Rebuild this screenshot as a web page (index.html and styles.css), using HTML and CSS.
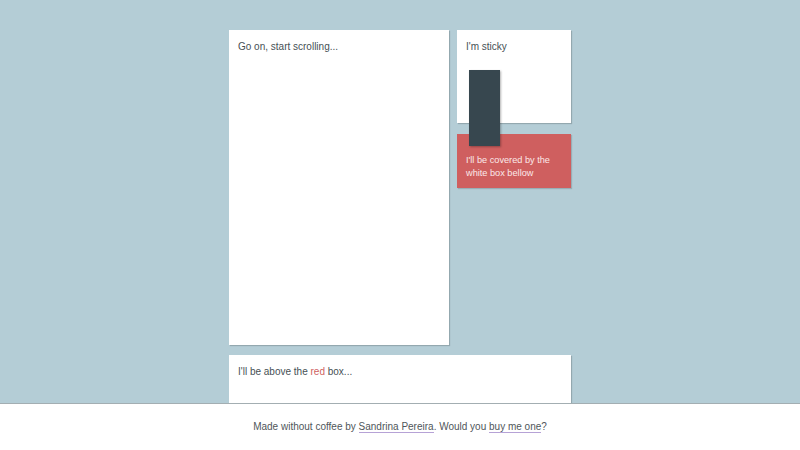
FILE: index.html
```html
<!DOCTYPE html>
<html>
<head>
<meta charset="utf-8">
<link rel="stylesheet" href="styles.css">
</head>
<body>
<div class="page">
  <div class="row">
    <div class="card main">Go on, start scrolling...</div>
    <div class="side">
      <div class="card sticky">I'm sticky</div>
      <div class="red">I'll be covered by the white box bellow</div>
      <div class="dark"></div>
    </div>
  </div>
  <div class="card bottom">I'll be above the <span class="hl">red</span> box...</div>
</div>
<footer class="footer"><p class="credit">Made without coffee by <a href="#">Sandrina Pereira</a>. Would you <a href="#">buy me one</a>?</p></footer>
</body>
</html>
```
FILE: styles.css
```css
html, body {
  margin: 0;
  padding: 0;
  height: 100%;
  overflow: hidden;
}
body {
  background: #b4cdd6;
  font-family: "Liberation Sans", Arial, sans-serif;
  font-size: 10px;
  color: #4a5257;
}
.page {
  width: 342px;
  margin: 0 auto;
  padding-top: 30px;
  display: flex;
  flex-direction: column;
  gap: 10px;
}
.row {
  display: flex;
  gap: 8px;
  align-items: flex-start;
}
.card {
  background: #fff;
  box-shadow: 1px 1px 1px rgba(0, 0, 0, 0.18);
  padding: 10px 9px;
  box-sizing: border-box;
  line-height: 13px;
  font-size: 10px;
  color: #465055;
}
.main {
  width: 220px;
  height: 315px;
}
.side {
  width: 114px;
  position: relative;
  display: flex;
  flex-direction: column;
  gap: 11px;
}
.sticky {
  height: 93px;
}
.red {
  background: #cf5f5f;
  color: #fbe9e9;
  height: 54px;
  box-sizing: border-box;
  padding: 20px 9px 0;
  font-size: 9.2px;
  line-height: 12.5px;
  box-shadow: 1px 1px 1px rgba(0, 0, 0, 0.15);
}
.dark {
  position: absolute;
  left: 12px;
  top: 40px;
  width: 31px;
  height: 76px;
  background: #37474f;
  box-shadow: 1px 1px 2px rgba(0, 0, 0, 0.3);
}
.bottom {
  height: 80px;
}
.hl {
  color: #cf5f5f;
}
.footer {
  position: fixed;
  left: 0;
  right: 0;
  bottom: 0;
  height: 47px;
  box-sizing: border-box;
  background: #fff;
  border-top: 1px solid #a3aeb2;
  color: #4f565a;
  font-size: 10px;
  text-align: center;
}
.credit {
  margin: 0;
  line-height: 46px;
}
.footer a {
  color: inherit;
  text-decoration: none;
  border-bottom: 1px solid #b6a2d6;
}
```
